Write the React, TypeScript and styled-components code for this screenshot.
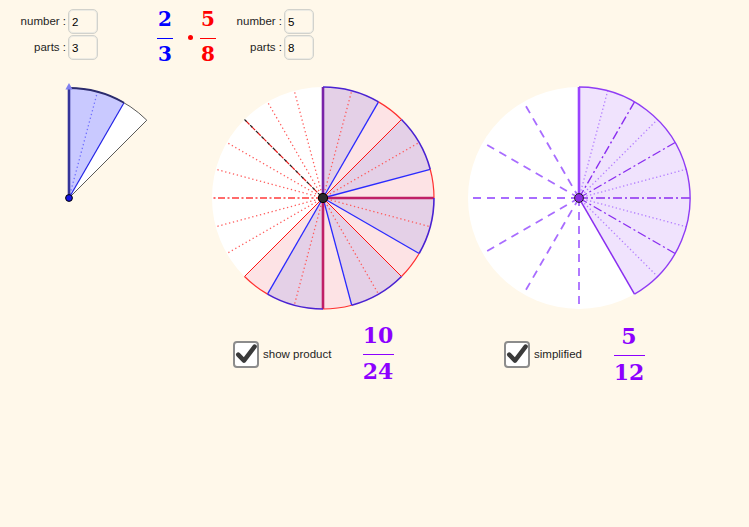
import React from "react";
import styled, { createGlobalStyle } from "styled-components";

const GlobalStyle = createGlobalStyle`
  html, body {
    margin: 0;
    padding: 0;
    background: #fff8ea;
  }
  body {
    font-family: "Liberation Sans", Arial, sans-serif;
  }
`;

const Page = styled.div`
  width: 749px;
  height: 527px;
  display: flex;
  flex-direction: column;
  overflow: hidden;
`;

const TopBar = styled.div`
  display: flex;
  align-items: flex-start;
  height: 70px;
  padding-top: 9px;
  box-sizing: border-box;
`;

const InputGrid = styled.div<{ $labelWidth: number }>`
  display: grid;
  grid-template-columns: ${(p) => p.$labelWidth}px 30px;
  column-gap: 2px;
  row-gap: 1px;
  align-items: center;
`;

const FieldLabel = styled.label`
  font-size: 11.5px;
  line-height: 25px;
  color: #1e1e1e;
  text-align: right;
  white-space: nowrap;
`;

const NumberBox = styled.input`
  width: 30px;
  height: 25px;
  box-sizing: border-box;
  border: 1px solid #d2d2cc;
  border-radius: 5px;
  background: transparent;
  box-shadow: inset 0 0 0 1px #ecebe4;
  padding: 0 0 0 3px;
  margin: 0;
  font-family: "Liberation Sans", Arial, sans-serif;
  font-size: 11.5px;
  color: #000;
  outline: none;
`;

const FracBox = styled.div<{ $size: number; $color: string; $w: number; $ml: number; $mt: number }>`
  display: flex;
  flex-direction: column;
  align-items: center;
  flex: none;
  width: ${(p) => p.$w}px;
  margin-left: ${(p) => p.$ml}px;
  margin-top: ${(p) => p.$mt}px;
  color: ${(p) => p.$color};
  font-family: "DejaVu Serif", "Liberation Serif", serif;
  font-weight: bold;
  font-size: ${(p) => p.$size}px;
  line-height: ${(p) => p.$size}px;
`;

const FracBar = styled.div<{ $w: number; $above: number; $below: number }>`
  width: ${(p) => p.$w}px;
  height: 1.4px;
  background: currentColor;
  margin: ${(p) => p.$above}px 0 ${(p) => p.$below}px;
`;

const TimesDot = styled.span`
  flex: none;
  width: 5px;
  height: 5px;
  border-radius: 50%;
  background: #ff0000;
  margin: 26px 0 0 13px;
`;

const DiagramRow = styled.div`
  display: flex;
  align-items: flex-start;
  margin-top: 8px;
  padding-left: 59px;
`;

const Diagram = styled.svg<{ $offset: number }>`
  display: block;
  flex: none;
  margin-left: ${(p) => p.$offset}px;
  overflow: visible;
`;

const ControlRow = styled.div`
  display: flex;
  align-items: flex-start;
  margin-top: 6px;
  padding-left: 233px;
`;

const CheckBox = styled.div<{ $ml: number }>`
  flex: none;
  width: 26px;
  height: 27px;
  box-sizing: border-box;
  margin: 17px 0 0 ${(p) => p.$ml}px;
  border: 2px solid #8c8c8c;
  border-radius: 4px;
  background: #fff;
  display: flex;
  align-items: center;
  justify-content: center;
`;

const CheckLabel = styled.span<{ $w: number }>`
  flex: none;
  width: ${(p) => p.$w}px;
  box-sizing: border-box;
  padding-left: 4px;
  margin-top: 23px;
  font-size: 11.5px;
  line-height: 14px;
  color: #1e1e1e;
  white-space: nowrap;
`;

type FracProps = {
  num: string;
  den: string;
  color: string;
  size: number;
  w: number;
  barW: number;
  above: number;
  below: number;
  ml?: number;
  mt?: number;
};

const Fraction = ({ num, den, color, size, w, barW, above, below, ml = 0, mt = 0 }: FracProps) => (
  <FracBox $size={size} $color={color} $w={w} $ml={ml} $mt={mt}>
    <span>{num}</span>
    <FracBar $w={barW} $above={above} $below={below} />
    <span>{den}</span>
  </FracBox>
);

const rad = (d: number) => (d * Math.PI) / 180;
const pt = (cx: number, cy: number, r: number, d: number) => [
  cx + r * Math.sin(rad(d)),
  cy - r * Math.cos(rad(d)),
];

const sectorPath = (cx: number, cy: number, r: number, a0: number, a1: number) => {
  const [x0, y0] = pt(cx, cy, r, a0);
  const [x1, y1] = pt(cx, cy, r, a1);
  const large = a1 - a0 > 180 ? 1 : 0;
  return `M${cx} ${cy}L${x0} ${y0}A${r} ${r} 0 ${large} 1 ${x1} ${y1}Z`;
};

const arcPath = (cx: number, cy: number, r: number, a0: number, a1: number) => {
  const [x0, y0] = pt(cx, cy, r, a0);
  const [x1, y1] = pt(cx, cy, r, a1);
  const large = a1 - a0 > 180 ? 1 : 0;
  return `M${x0} ${y0}A${r} ${r} 0 ${large} 1 ${x1} ${y1}`;
};

type RayStyle = { stroke: string; width: number; dash?: string; layer: number };

const Ray = ({ cx, cy, r, deg, s }: { cx: number; cy: number; r: number; deg: number; s: RayStyle }) => {
  const [x, y] = pt(cx, cy, r, deg);
  return (
    <line
      x1={cx}
      y1={cy}
      x2={x}
      y2={y}
      stroke={s.stroke}
      strokeWidth={s.width}
      strokeDasharray={s.dash}
    />
  );
};

const degs = (step: number) => Array.from({ length: 360 / step }, (_, i) => i * step);

// left: one piece of 5/8, 2/3 of it shaded
const PiecePie = () => {
  const cx = 10;
  const cy = 120;
  const r = 110;
  const [tx, ty] = pt(cx, cy, r, 30);
  const [dx, dy] = pt(cx, cy, r, 15);
  return (
    <Diagram $offset={0} width={100} height={240} viewBox="0 0 100 240">
      <path d={sectorPath(cx, cy, r, 0, 45)} fill="#fff" stroke="#5a5a5a" strokeWidth={1} />
      <path d={sectorPath(cx, cy, r, 0, 30)} fill="#c9c9ff" />
      <line x1={cx} y1={cy} x2={dx} y2={dy} stroke="#6f6fff" strokeWidth={1.3} strokeDasharray="1.3 2.6" />
      <line x1={cx} y1={cy} x2={tx} y2={ty} stroke="#2222e6" strokeWidth={1.2} />
      <path d={arcPath(cx, cy, r, 0, 30)} fill="none" stroke="#2b2b6e" strokeWidth={1.8} />
      <line x1={cx} y1={cy} x2={cx} y2={cy - r} stroke="#34349a" strokeWidth={2.6} />
      <polygon points={`${cx},5 ${cx - 3.6},11.5 ${cx + 3.6},11.5`} fill="#8080f0" />
      <circle cx={cx} cy={cy} r={3.4} fill="#1616e6" stroke="#000" strokeWidth={1} />
    </Diagram>
  );
};

const productRay = (d: number): RayStyle => {
  if (d === 0) return { stroke: "#7a24a8", width: 2.6, layer: 3 };
  if (d === 90 || d === 180) return { stroke: "#c01f66", width: 2.6, layer: 3 };
  if (d === 45 || d === 135 || d === 225) return { stroke: "#ff1010", width: 1, layer: 2 };
  if ([30, 75, 120, 165, 210].includes(d)) return { stroke: "#2a2aff", width: 1.3, layer: 2 };
  if (d === 270) return { stroke: "#ff3b3b", width: 1.3, dash: "7 2.5 2 2.5", layer: 1 };
  if (d === 315) return { stroke: "#e01818", width: 1.2, dash: "5 3", layer: 1 };
  return { stroke: "#ff5a5a", width: 1.3, dash: "1.3 2.7", layer: 0 };
};

// middle: 2/3 of 5/8
const ProductPie = () => {
  const c = 120;
  const r = 111;
  const pieces = [0, 1, 2, 3, 4];
  const rays = degs(15).sort((a, b) => productRay(a).layer - productRay(b).layer);
  return (
    <Diagram $offset={44} width={240} height={240} viewBox="0 0 240 240">
      <circle cx={c} cy={c} r={r} fill="#fff" />
      {pieces.map((k) => (
        <path key={`p${k}`} d={sectorPath(c, c, r, k * 45, k * 45 + 45)} fill="#fde3e5" />
      ))}
      {pieces.map((k) => (
        <path key={`q${k}`} d={sectorPath(c, c, r, k * 45, k * 45 + 30)} fill="#e4d0e7" />
      ))}
      {rays.map((d) => (
        <Ray key={d} cx={c} cy={c} r={r} deg={d} s={productRay(d)} />
      ))}
      <Ray cx={c} cy={c} r={r} deg={315} s={{ stroke: "#202020", width: 1.2, dash: "0 4 3 1", layer: 1 }} />
      {pieces.map((k) => (
        <path
          key={`a${k}`}
          d={arcPath(c, c, r, k * 45 + 30, k * 45 + 45)}
          fill="none"
          stroke="#ff3030"
          strokeWidth={1.2}
        />
      ))}
      {pieces.map((k) => (
        <path
          key={`b${k}`}
          d={arcPath(c, c, r, k * 45, k * 45 + 30)}
          fill="none"
          stroke="#4a22d2"
          strokeWidth={1.6}
        />
      ))}
      <circle cx={c} cy={c} r={4.6} fill="#2c2c2c" stroke="#000" strokeWidth={1} />
    </Diagram>
  );
};

const simpleRay = (d: number): RayStyle | null => {
  if (d === 0) return { stroke: "#9a44ff", width: 2.6, layer: 3 };
  if (d === 150) return { stroke: "#8a2ef0", width: 1.5, layer: 3 };
  if (d < 150 && d % 30 === 0) return { stroke: "#8a2ef0", width: 1.4, dash: "9 3 2 3", layer: 2 };
  if (d < 150) return { stroke: "#b27cff", width: 1.3, dash: "1.3 2.5", layer: 1 };
  if (d % 30 === 0) return { stroke: "#a86cff", width: 1.8, dash: "8 6", layer: 1 };
  return null;
};

// right: 5/12
const SimplePie = () => {
  const c = 120;
  const r = 111;
  const rays = degs(15)
    .filter((d) => simpleRay(d) !== null)
    .sort((a, b) => (simpleRay(a) as RayStyle).layer - (simpleRay(b) as RayStyle).layer);
  return (
    <Diagram $offset={16} width={240} height={240} viewBox="0 0 240 240">
      <circle cx={c} cy={c} r={r} fill="#fff" />
      <path d={sectorPath(c, c, r, 0, 150)} fill="#f0e3fd" />
      {rays.map((d) => (
        <Ray key={d} cx={c} cy={c} r={r} deg={d} s={simpleRay(d) as RayStyle} />
      ))}
      <path d={arcPath(c, c, r, 0, 150)} fill="none" stroke="#8f3cf5" strokeWidth={1.4} />
      <circle cx={c} cy={c} r={4.4} fill="#8a2be2" stroke="#222" strokeWidth={1} />
    </Diagram>
  );
};

const CheckMark = () => (
  <svg width="22" height="23" viewBox="0 0 22 23">
    <polyline
      points="3.2,11.6 9,17.6 19.6,3.6"
      fill="none"
      stroke="#3a3a3a"
      strokeWidth={4.4}
      strokeLinecap="round"
      strokeLinejoin="round"
    />
  </svg>
);

const PURPLE = "#8c00ff";

export default function App() {
  return (
    <Page>
      <GlobalStyle />
      <TopBar>
        <InputGrid $labelWidth={66}>
          <FieldLabel>number :</FieldLabel>
          <NumberBox readOnly value="2" />
          <FieldLabel>parts :</FieldLabel>
          <NumberBox readOnly value="3" />
        </InputGrid>
        <Fraction num="2" den="3" color="#0000ff" size={20} w={20} barW={16} above={8.4} below={4.7} ml={57} mt={0.2} />
        <TimesDot />
        <Fraction num="5" den="8" color="#ff0000" size={20} w={20} barW={16} above={8.4} below={4.7} ml={5} mt={0.2} />
        <InputGrid $labelWidth={64}>
          <FieldLabel>number :</FieldLabel>
          <NumberBox readOnly value="5" />
          <FieldLabel>parts :</FieldLabel>
          <NumberBox readOnly value="8" />
        </InputGrid>
      </TopBar>
      <DiagramRow>
        <PiecePie />
        <ProductPie />
        <SimplePie />
      </DiagramRow>
      <ControlRow>
        <CheckBox $ml={0}>
          <CheckMark />
        </CheckBox>
        <CheckLabel $w={99}>show product</CheckLabel>
        <Fraction num="10" den="24" color={PURPLE} size={22} w={40} barW={31} above={7.5} below={5.6} />
        <CheckBox $ml={106}>
          <CheckMark />
        </CheckBox>
        <CheckLabel $w={79}>simplified</CheckLabel>
        <Fraction num="5" den="12" color={PURPLE} size={22} w={40} barW={31} above={7.5} below={5.6} mt={1} />
      </ControlRow>
    </Page>
  );
}
